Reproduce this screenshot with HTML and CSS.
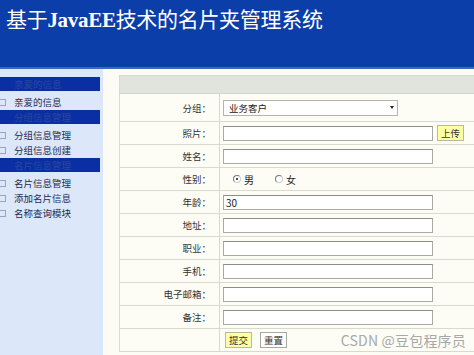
FILE: index.html
```html
<!DOCTYPE html>
<html lang="zh">
<head>
<meta charset="utf-8">
<title>名片夹管理系统</title>
<link rel="stylesheet" href="styles.css">
</head>
<body>
<header class="top">
  <h1 class="title">基于<b class="latin">JavaEE</b>技术的名片夹管理系统</h1>
</header>
<div class="frame">
  <aside class="side">
    <div class="side-head">亲爱的信息</div>
    <div class="side-item"><span class="box"></span>亲爱的信息</div>
    <div class="side-head">分组信息管理</div>
    <div class="side-item"><span class="box"></span>分组信息管理</div>
    <div class="side-item"><span class="box"></span>分组信息创建</div>
    <div class="side-head">名片信息管理</div>
    <div class="side-item"><span class="box"></span>名片信息管理</div>
    <div class="side-item"><span class="box"></span>添加名片信息</div>
    <div class="side-item"><span class="box"></span>名称查询模块</div>
  </aside>
  <main class="main">
    <table class="form">
      <tr class="head"><td colspan="2"></td></tr>
      <tr class="first">
        <td class="lab">分组：</td>
        <td class="val"><div class="select"><span>业务客户</span><span class="arrow"></span></div></td>
      </tr>
      <tr><td class="lab">照片：</td><td class="val"><div class="row"><span class="input"></span><span class="btn yellow">上传</span></div></td></tr>
      <tr><td class="lab">姓名：</td><td class="val"><span class="input"></span></td></tr>
      <tr><td class="lab">性别：</td><td class="val"><div class="radios"><span class="radio"><span class="dot on"></span>男</span><span class="radio"><span class="dot"></span>女</span></div></td></tr>
      <tr><td class="lab">年龄：</td><td class="val"><span class="input">30</span></td></tr>
      <tr><td class="lab">地址：</td><td class="val"><span class="input"></span></td></tr>
      <tr><td class="lab">职业：</td><td class="val"><span class="input"></span></td></tr>
      <tr><td class="lab">手机：</td><td class="val"><span class="input"></span></td></tr>
      <tr><td class="lab">电子邮箱：</td><td class="val"><span class="input"></span></td></tr>
      <tr><td class="lab">备注：</td><td class="val"><span class="input"></span></td></tr>
      <tr><td class="lab"></td><td class="val"><div class="row btns"><span class="btn yellow">提交</span><span class="btn white">重置</span></div></td></tr>
    </table>
    <div class="mark">CSDN @豆包程序员</div>
  </main>
</div>
</body>
</html>
```
FILE: styles.css
```css
html, body {
  margin: 0;
  padding: 0;
  width: 474px;
  height: 355px;
  overflow: hidden;
  background: #fbfbf3;
  font-family: "Noto Sans CJK SC", "Noto Sans", sans-serif;
}
.top {
  height: 67px;
  background: #0b3ea8;
  border-bottom: 2px solid #3f68bd;
  box-sizing: content-box;
}
.title {
  margin: 0;
  padding: 6px 0 0 6px;
  font-size: 21px;
  line-height: 28px;
  font-weight: normal;
  color: #ffffff;
  font-family: "Liberation Serif", "Noto Sans CJK SC", serif;
  letter-spacing: -0.3px;
}
.latin {
  font-weight: bold;
}
.frame {
  display: flex;
  height: 286px;
}
.side {
  width: 103px;
  background: #dce8f9;
  padding-top: 8px;
  box-sizing: border-box;
  margin-right: 4px;
}
.side-head {
  width: 100px;
  height: 14px;
  background: #0a2fa2;
  color: #2a47a0;
  font-size: 9.5px;
  line-height: 14px;
  padding-left: 14px;
  box-sizing: border-box;
  margin-bottom: 4px;
}
.side-item {
  height: 15px;
  font-size: 9.5px;
  line-height: 15px;
  color: #1b2b55;
  display: flex;
  align-items: center;
}
.box {
  width: 5px;
  height: 5px;
  border: 1px solid #9aa6b8;
  border-left: none;
  margin-right: 8px;
}
.main {
  flex: 1;
  position: relative;
  padding: 6px 0 0 12px;
  background: #fcfcf4;
}
.form {
  border-collapse: collapse;
  width: 100%;
  border: 1px solid #d6dccd;
  border-right: none;
}
.form td {
  border-top: 1px solid #d6dccd;
  padding: 0;
  background: #fdfdf6;
}
.form tr {
  height: 23px;
}
.form tr.head {
  height: 17px;
}
.head td {
  height: 17px;
  background: #e1e4dc;
  border-bottom: 1px solid #cfd8c6;
}
.form tr.first {
  height: 28px;
}
.lab {
  width: 100px;
  border-right: 1px solid #d6dccd;
  text-align: right;
  padding-right: 8px !important;
  box-sizing: border-box;
  font-size: 9.5px;
  color: #333;
}
.val {
  padding-left: 3px !important;
  font-size: 9.5px;
  color: #222;
}
.input {
  display: block;
  width: 210px;
  height: 15px;
  box-sizing: border-box;
  border: 1px solid #a9aaa6;
  border-top-color: #8c8c88;
  background: #ffffff;
  font-size: 10px;
  line-height: 13px;
  padding-left: 2px;
}
.select {
  width: 175px;
  height: 16px;
  box-sizing: border-box;
  border: 1px solid #b5b5b0;
  background: #fff;
  display: flex;
  align-items: center;
  justify-content: space-between;
  padding: 0 3px 0 5px;
  font-size: 9.5px;
}
.arrow {
  width: 0;
  height: 0;
  border-left: 2.5px solid transparent;
  border-right: 2.5px solid transparent;
  border-top: 3px solid #222;
}
.row {
  display: flex;
  align-items: center;
}
.row .input {
  flex: none;
}
.btn {
  display: inline-block;
  height: 16px;
  line-height: 14px;
  padding: 0 3px;
  box-sizing: border-box;
  font-size: 9.5px;
  color: #333;
  border: 1px solid #b8b8a0;
}
.row .input + .btn {
  margin-left: 4px;
}
.yellow {
  background: #ffffa6;
}
.white {
  background: #ffffff;
  margin-left: 8px;
  border-color: #a8a8a8;
}
.btns {
  padding-left: 2px;
}
.radios {
  display: flex;
  padding-left: 10px;
  gap: 21px;
  font-size: 10px;
}
.radio {
  display: flex;
  align-items: center;
  gap: 3px;
}
.dot {
  width: 6px;
  height: 6px;
  border-radius: 50%;
  border: 1px solid #777;
  border-right-color: #ccc;
  border-bottom-color: #ccc;
  background: #fff;
  position: relative;
}
.dot.on::after {
  content: "";
  position: absolute;
  left: 2px;
  top: 2px;
  width: 2px;
  height: 2px;
  background: #111;
  border-radius: 50%;
}
.mark {
  position: absolute;
  right: 8px;
  bottom: 5px;
  font-size: 14px;
  color: #a8a8a8;
  font-family: "Noto Sans CJK SC", sans-serif;
  letter-spacing: 0.2px;
}
```
